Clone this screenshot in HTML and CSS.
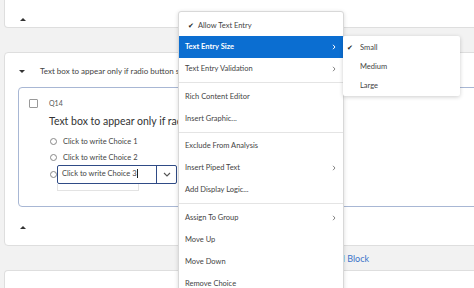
FILE: index.html
```html
<!DOCTYPE html>
<html lang="en">
<head>
<meta charset="UTF-8">
<title>Survey editor</title>
<link rel="stylesheet" href="styles.css">
</head>
<body>
<div class="page">
  <div class="block block-top">
    <span class="caret caret-up"></span>
  </div>

  <div class="block block-main">
    <div class="block-head">
      <span class="caret caret-down"></span>
      <span class="block-title">Text box to appear only if radio button selected</span>
    </div>

    <div class="question">
      <span class="checkbox"></span>
      <div class="question-body">
        <div class="qid">Q14</div>
        <div class="qtext">Text box to appear only if radio button selected</div>
        <div class="choices">
          <div class="choice"><span class="radio"></span><span>Click to write Choice 1</span></div>
          <div class="choice"><span class="radio"></span><span>Click to write Choice 2</span></div>
          <div class="choice choice-edit">
            <span class="radio"></span>
            <div class="edit-box">
              <span class="edit-text">Click to write Choice 3<span class="cursor"></span></span>
              <span class="edit-btn">
                <svg width="8" height="5" viewBox="0 0 8 5"><path d="M1 1l3 3 3-3" fill="none" stroke="#555" stroke-width="1.1"/></svg>
              </span>
            </div>
          </div>
          <div class="text-entry"></div>
        </div>
      </div>
    </div>

    <div class="block-foot">
      <span class="caret caret-up"></span>
    </div>
  </div>

  <div class="band">
    <a class="add-block">Add Block</a>
  </div>

  <div class="block block-bottom">
    <span class="block-title faint">If Text Entry Text Is Not Empty Display</span>
  </div>
</div>

<div class="menu">
  <div class="item"><span class="check">&#10004;</span>Allow Text Entry</div>
  <div class="item active">Text Entry Size<span class="chev"><svg width="4" height="6" viewBox="0 0 4 6"><path d="M1 0.8l2 2.2-2 2.2" fill="none" stroke="#fff" stroke-width="1"/></svg></span></div>
  <div class="item">Text Entry Validation<span class="chev"><svg width="4" height="6" viewBox="0 0 4 6"><path d="M1 0.8l2 2.2-2 2.2" fill="none" stroke="#777" stroke-width="0.9"/></svg></span></div>
  <div class="sep"></div>
  <div class="item">Rich Content Editor</div>
  <div class="item">Insert Graphic...</div>
  <div class="sep"></div>
  <div class="item">Exclude From Analysis</div>
  <div class="item">Insert Piped Text<span class="chev"><svg width="4" height="6" viewBox="0 0 4 6"><path d="M1 0.8l2 2.2-2 2.2" fill="none" stroke="#777" stroke-width="0.9"/></svg></span></div>
  <div class="item">Add Display Logic...</div>
  <div class="sep"></div>
  <div class="item">Assign To Group<span class="chev"><svg width="4" height="6" viewBox="0 0 4 6"><path d="M1 0.8l2 2.2-2 2.2" fill="none" stroke="#777" stroke-width="0.9"/></svg></span></div>
  <div class="item">Move Up</div>
  <div class="item">Move Down</div>
  <div class="item">Remove Choice</div>
</div>

<div class="submenu">
  <div class="sub-item"><span class="check">&#10004;</span>Small</div>
  <div class="sub-item">Medium</div>
  <div class="sub-item">Large</div>
</div>
</body>
</html>
```

FILE: styles.css
```css
body {
  margin: 0;
  background-color: #f2f2f2;
  font-family: Lato, "Open Sans", sans-serif;
  color: #444;
  overflow: hidden;
  height: 288px;
}
.page {
  padding-left: 4px;
  margin-right: -20px;
}
.block {
  background-color: #ffffff;
  border: 1px solid #dedede;
  border-radius: 4px;
}
.block-top {
  height: 28px;
  border-top: none;
  border-radius: 0 0 4px 4px;
  padding: 18px 0 0 15px;
  box-sizing: border-box;
}
.caret {
  display: block;
  width: 0;
  height: 0;
  border-left: 3px solid transparent;
  border-right: 3px solid transparent;
}
.caret-up {
  border-bottom: 3px solid #333;
}
.caret-down {
  border-top: 3px solid #333;
}

.block-main {
  margin-top: 24px;
  height: 194px;
  box-sizing: border-box;
  padding-top: 13px;
}
.block-head {
  display: flex;
  align-items: center;
  height: 10px;
  padding-left: 14px;
}
.block-head .caret {
  margin-right: 15px;
}
.block-title {
  font-size: 8px;
  color: #444;
  white-space: nowrap;
}

.question {
  display: flex;
  margin: 11px 0 0 13px;
  border: 1px solid #a8b7d4;
  border-radius: 4px;
  padding: 11px 0 15px 10px;
  height: 120px;
  box-sizing: border-box;
}
.checkbox {
  width: 7px;
  height: 7px;
  border: 1px solid #999;
  border-radius: 1px;
  flex-shrink: 0;
}
.question-body {
  margin-left: 11px;
  white-space: nowrap;
}
.qid {
  font-size: 7px;
  line-height: 9px;
  color: #555;
}
.qtext {
  font-size: 10.5px;
  line-height: 13px;
  margin-top: 7px;
  color: #333;
}
.choices {
  margin-top: 5px;
}
.choice {
  display: flex;
  align-items: center;
  height: 16px;
  font-size: 7.5px;
  color: #444;
}
.radio {
  width: 5px;
  height: 5px;
  border: 1px solid #888;
  border-radius: 50%;
  margin: 0 6px 0 1px;
  flex-shrink: 0;
}
.choice-edit {
  height: 19px;
}
.choice-edit .radio {
  margin-right: 0;
}
.edit-box {
  display: flex;
  height: 19px;
  box-sizing: border-box;
  border: 1.5px solid #2f4b86;
  border-radius: 2px;
}
.edit-text {
  width: 99px;
  padding-left: 4px;
  line-height: 16px;
  box-sizing: border-box;
  border-right: 1.5px solid #2f4b86;
}
.cursor {
  display: inline-block;
  width: 1px;
  height: 9px;
  background-color: #222;
  vertical-align: -2px;
}
.edit-btn {
  width: 19px;
  display: flex;
  align-items: center;
  justify-content: center;
}
.text-entry {
  width: 82px;
  height: 7px;
  margin-left: 8px;
  border: 1px solid #e3e3e3;
  border-top: none;
  box-sizing: border-box;
}
.block-foot {
  padding: 19px 0 0 15px;
}

.band {
  height: 24px;
  display: flex;
  align-items: center;
  justify-content: flex-end;
  padding-right: 125px;
}
.add-block {
  font-size: 9px;
  color: #3b73c9;
}
.block-bottom {
  height: 40px;
  padding: 9px 0 0 40px;
  box-sizing: border-box;
  border-bottom: none;
}
.faint {
  color: #777;
}

/* context menu */
.menu {
  position: absolute;
  left: 178px;
  top: 11px;
  width: 164px;
  background-color: #ffffff;
  border: 1px solid #d8d8d8;
  border-radius: 3px;
  box-shadow: 0 1px 4px rgba(0, 0, 0, 0.15);
  padding-top: 2px;
  font-size: 7.5px;
  color: #444;
}
.item {
  position: relative;
  height: 22px;
  line-height: 22px;
  padding-left: 6px;
  white-space: nowrap;
}
.item .check {
  font-size: 7px;
  margin: 0 4px 0 3px;
  color: #222;
}
.item.active {
  background-color: #0b6ed1;
  color: #ffffff;
  font-weight: bold;
}
.chev {
  position: absolute;
  right: 7px;
  top: 8px;
  line-height: 0;
}
.sep {
  height: 1px;
  margin: 2px 0 2.5px;
  background-color: #e4e4e4;
}

.submenu {
  position: absolute;
  left: 343px;
  top: 36px;
  width: 117px;
  background-color: #ffffff;
  border-radius: 2px;
  box-shadow: 0 1px 4px rgba(0, 0, 0, 0.2);
  padding: 2px 0 1px;
  font-size: 7.5px;
  color: #444;
}
.sub-item {
  height: 19px;
  line-height: 19px;
  padding-left: 17px;
  position: relative;
}
.sub-item .check {
  position: absolute;
  left: 4px;
  font-size: 7px;
  color: #222;
}
```
